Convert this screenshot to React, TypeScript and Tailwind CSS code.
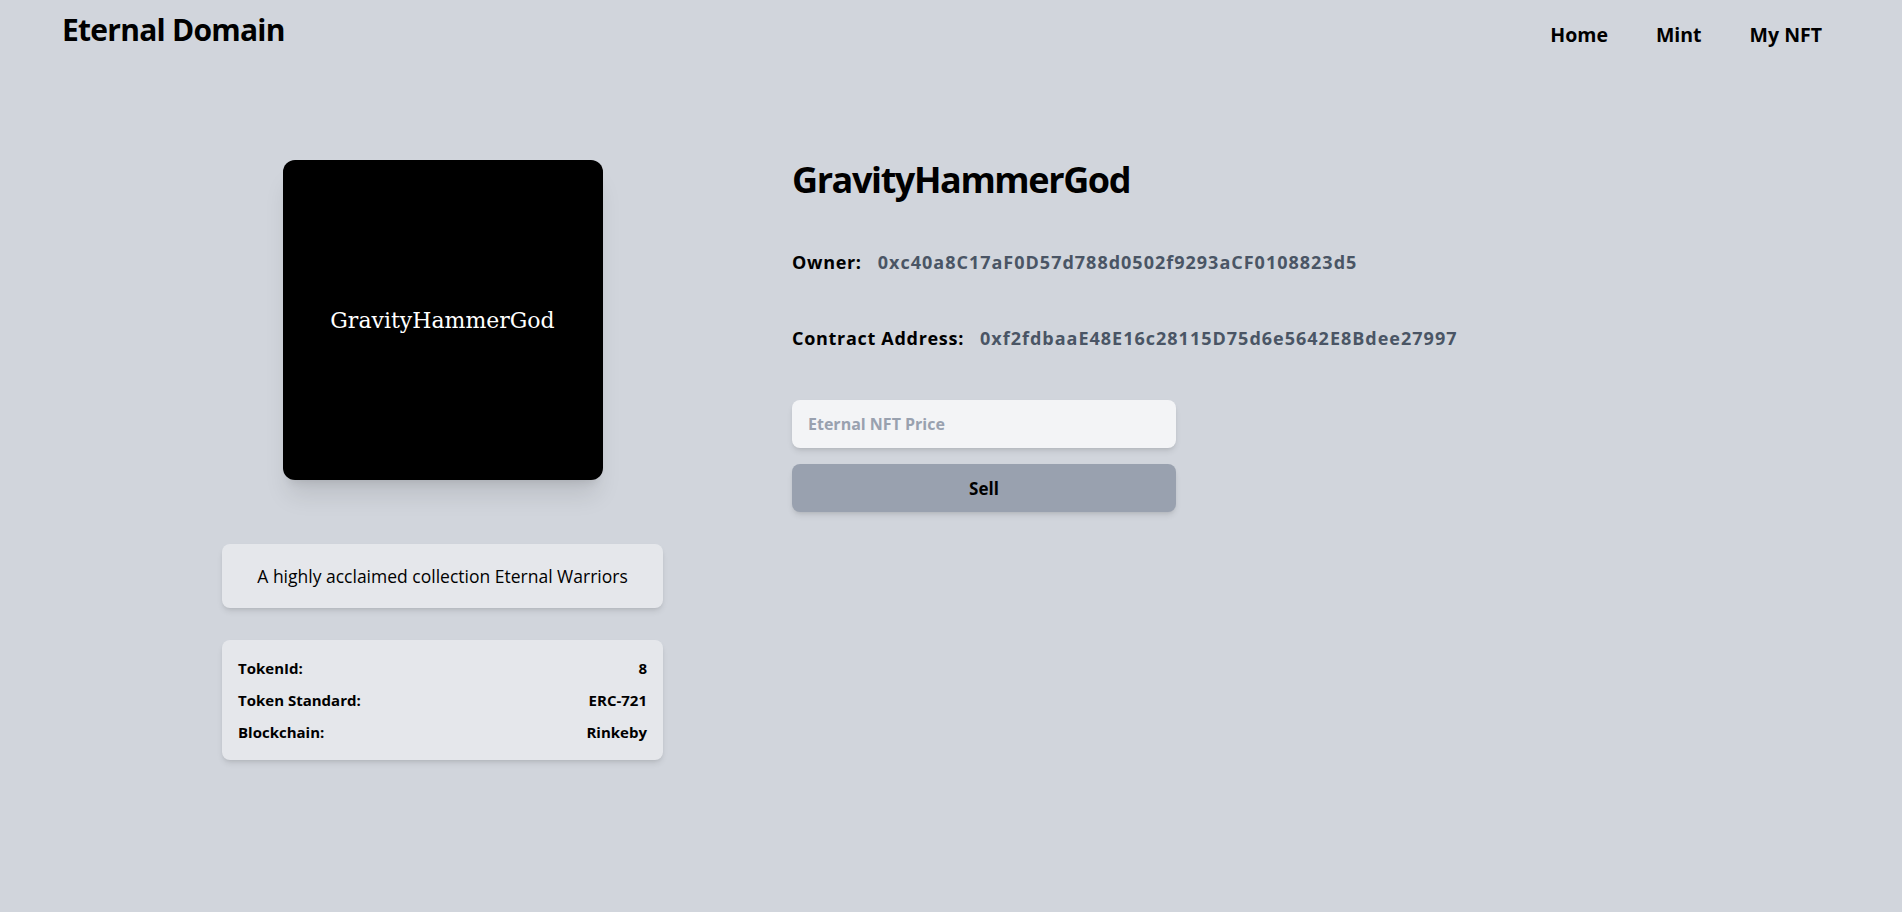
import React from "react";

const owner = "0xc40a8C17aF0D57d788d0502f9293aCF0108823d5";
const contract = "0xf2fdbaaE48E16c28115D75d6e5642E8Bdee27997";

const details = [
  { label: "TokenId:", value: "8" },
  { label: "Token Standard:", value: "ERC-721" },
  { label: "Blockchain:", value: "Rinkeby" },
];

function Header() {
  return (
    <header className="flex items-start justify-between pl-[62px] pr-[56px]">
      <h1 className="pt-3 text-3xl font-bold tracking-tight text-black">Eternal Domain</h1>
      <nav className="flex pt-5 text-[19.5px] font-bold text-black">
        <a className="px-6">Home</a>
        <a className="px-6">Mint</a>
        <a className="px-6">My NFT</a>
      </nav>
    </header>
  );
}

export default function App() {
  return (
    <div
      className="min-h-screen bg-gray-300 text-black"
      style={{ fontFamily: '"Open Sans", "Noto Sans", sans-serif' }}
    >
      <Header />

      <main className="flex pl-[222px] pt-[111px]">
        {/* Left column */}
        <div className="flex w-[441px] flex-col items-center">
          <div className="flex h-80 w-80 items-center justify-center rounded-xl bg-black shadow-xl">
            <span
              className="text-[22px] text-white"
              style={{ fontFamily: '"DejaVu Serif", serif' }}
            >
              GravityHammerGod
            </span>
          </div>

          <div className="mt-16 flex h-16 w-full items-center justify-center rounded-lg bg-gray-200 shadow-md">
            <p className="text-[17.5px]">A highly acclaimed collection Eternal Warriors</p>
          </div>

          <div className="mt-8 flex w-full flex-col gap-2 rounded-lg bg-gray-200 px-4 py-4 shadow-md">
            {details.map((d) => (
              <div key={d.label} className="flex h-6 items-center justify-between text-[15px] font-bold">
                <span>{d.label}</span>
                <span>{d.value}</span>
              </div>
            ))}
          </div>
        </div>

        {/* Right column */}
        <div className="ml-[129px] flex flex-col">
          <h2 className="text-4xl font-bold tracking-[-1.4px]">GravityHammerGod</h2>

          <p className="mt-12 text-lg font-bold tracking-[0.7px]">
            Owner:<span className="ml-4 tracking-[1px] text-gray-600">{owner}</span>
          </p>

          <p className="mt-12 text-lg font-bold tracking-[0.7px]">
            Contract Address:<span className="ml-4 tracking-[1px] text-gray-600">{contract}</span>
          </p>

          <input
            className="mt-12 h-12 w-96 rounded-lg bg-gray-100 px-4 text-base font-bold shadow-md outline-none placeholder:text-gray-400"
            placeholder="Eternal NFT Price"
          />
          <button className="mt-4 h-12 w-96 rounded-lg bg-gray-400 text-[17px] font-bold shadow-md">
            Sell
          </button>
        </div>
      </main>
    </div>
  );
}
